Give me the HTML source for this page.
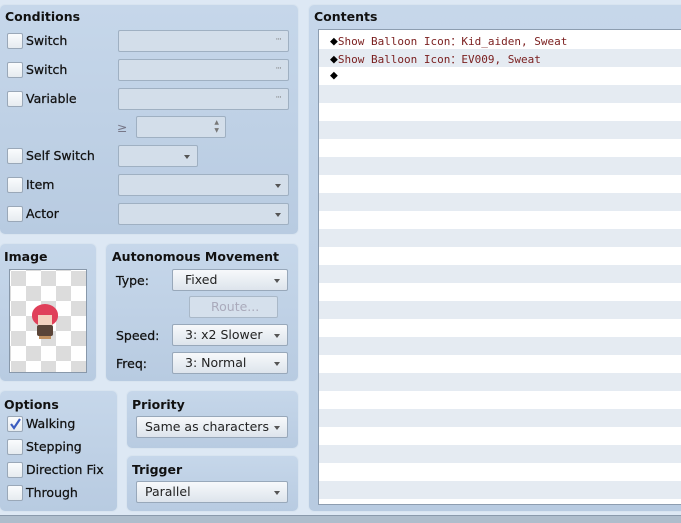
<!DOCTYPE html>
<html><head><style>
*{box-sizing:border-box;margin:0;padding:0}
body{width:681px;height:523px;overflow:hidden;background:#dde8f4;font-family:"DejaVu Sans","Liberation Sans",sans-serif;font-size:12px;color:#1a1a1a;position:relative}
.p{position:absolute;background:linear-gradient(#c6d7ea,#b8cbe1);border-radius:5px;box-shadow:0 0 0 1px #d8e4f0}
.t{position:absolute;font-weight:bold;font-size:12.5px;color:#111}
.cb{position:absolute;width:16px;height:16px;background:linear-gradient(#fafcfe,#e6ebf0);border:1px solid #9aa8b8;border-radius:2px}
.l{position:absolute;font-size:12.5px;color:#111;-webkit-text-stroke:0.25px #111}
.f{position:absolute;height:22px;border:1px solid #9fb0c2;border-radius:2px;background:#d3deea}
.dd{position:absolute;height:22px;border:1px solid #98a8ba;border-radius:2px;background:linear-gradient(#f7f9fb,#dde4ec);font-size:12.5px;padding:2px 0 0 12px;color:#222}
.ar{position:absolute;right:7px;top:9px;width:0;height:0;border-left:3.5px solid transparent;border-right:3.5px solid transparent;border-top:4px solid #555}
.dots{position:absolute;right:7px;top:4px;font-size:9px;color:#777;letter-spacing:-1px}
.row{position:absolute;left:0;right:0;height:18px;font-family:"DejaVu Sans Mono","Liberation Mono",monospace;font-size:11px;color:#7a1e1e;padding:2px 0 0 11px;white-space:pre}
.dm{color:#000;font-size:13px;line-height:11px}
</style></head><body>
<div class="p" style="left:0;top:5px;width:298px;height:229px"></div>
<div class="t" style="left:5px;top:9px">Conditions</div>
<div class="cb" style="left:7px;top:33px"></div><div class="l" style="left:26px;top:33px">Switch</div>
<div class="f" style="left:118px;top:30px;width:171px"><span class="dots">···</span></div>
<div class="cb" style="left:7px;top:62px"></div><div class="l" style="left:26px;top:62px">Switch</div>
<div class="f" style="left:118px;top:59px;width:171px"><span class="dots">···</span></div>
<div class="cb" style="left:7px;top:91px"></div><div class="l" style="left:26px;top:91px">Variable</div>
<div class="f" style="left:118px;top:88px;width:171px"><span class="dots">···</span></div>
<div class="l" style="left:117px;top:120px;color:#778;-webkit-text-stroke:0">≥</div>
<div class="f" style="left:136px;top:116px;width:90px"><span style="position:absolute;right:6px;top:2px;font-size:6px;color:#777;line-height:8px">▲<br>▼</span></div>
<div class="cb" style="left:7px;top:148px"></div><div class="l" style="left:26px;top:148px">Self Switch</div>
<div class="dd" style="left:118px;top:145px;width:80px;background:#d3deea;border-color:#9fb0c2"><span class="ar"></span></div>
<div class="cb" style="left:7px;top:177px"></div><div class="l" style="left:26px;top:177px">Item</div>
<div class="dd" style="left:118px;top:174px;width:171px;background:#d3deea;border-color:#9fb0c2"><span class="ar"></span></div>
<div class="cb" style="left:7px;top:206px"></div><div class="l" style="left:26px;top:206px">Actor</div>
<div class="dd" style="left:118px;top:203px;width:171px;background:#d3deea;border-color:#9fb0c2"><span class="ar"></span></div>

<div class="p" style="left:0;top:244px;width:96px;height:137px"></div>
<div class="t" style="left:4px;top:249px">Image</div>
<div style="position:absolute;left:9px;top:269px;width:78px;height:104px;border:1px solid #8898aa;background-color:#fff;background-image:conic-gradient(#fff 25%,#dcdcdc 0 50%,#fff 0 75%,#dcdcdc 0);background-size:30px 30px;background-position:1px 1px"></div>
<div style="position:absolute;left:32px;top:304px;width:26px;height:22px;background:#e0405a;border-radius:50% 50% 45% 45%"></div>
<div style="position:absolute;left:38px;top:315px;width:14px;height:10px;background:#f3d2c0"></div>
<div style="position:absolute;left:37px;top:325px;width:16px;height:11px;background:#5a4438;border-radius:2px"></div>
<div style="position:absolute;left:39px;top:336px;width:12px;height:3px;background:#c09060"></div>

<div class="p" style="left:106px;top:244px;width:192px;height:137px"></div>
<div class="t" style="left:112px;top:249px">Autonomous Movement</div>
<div class="l" style="left:116px;top:273px">Type:</div>
<div class="dd" style="left:172px;top:269px;width:116px">Fixed<span class="ar"></span></div>
<div class="dd" style="left:189px;top:296px;width:89px;color:#aab;padding-left:21px;background:#d5e0ec;border-color:#a9b8c8">Route...</div>
<div class="l" style="left:116px;top:328px">Speed:</div>
<div class="dd" style="left:172px;top:324px;width:116px">3: x2 Slower<span class="ar"></span></div>
<div class="l" style="left:116px;top:356px">Freq:</div>
<div class="dd" style="left:172px;top:352px;width:116px">3: Normal<span class="ar"></span></div>

<div class="p" style="left:0;top:391px;width:117px;height:120px"></div>
<div class="t" style="left:4px;top:397px">Options</div>
<div class="cb" style="left:7px;top:416px"></div>
<svg style="position:absolute;left:9px;top:418px" width="13" height="12"><path d="M2 6 L5 10 L11 1" stroke="#3a5cc0" stroke-width="2.2" fill="none"/></svg>
<div class="l" style="left:26px;top:416px">Walking</div>
<div class="cb" style="left:7px;top:439px"></div><div class="l" style="left:26px;top:439px">Stepping</div>
<div class="cb" style="left:7px;top:462px"></div><div class="l" style="left:26px;top:462px">Direction Fix</div>
<div class="cb" style="left:7px;top:485px"></div><div class="l" style="left:26px;top:485px">Through</div>

<div class="p" style="left:127px;top:391px;width:171px;height:57px"></div>
<div class="t" style="left:132px;top:397px">Priority</div>
<div class="dd" style="left:136px;top:416px;width:152px;padding-left:8px">Same as characters<span class="ar"></span></div>
<div class="p" style="left:127px;top:456px;width:171px;height:55px"></div>
<div class="t" style="left:132px;top:462px">Trigger</div>
<div class="dd" style="left:136px;top:481px;width:152px;padding-left:8px">Parallel<span class="ar"></span></div>

<div class="p" style="left:309px;top:5px;width:380px;height:506px"></div>
<div class="t" style="left:314px;top:9px">Contents</div>
<div style="position:absolute;left:318px;top:29px;width:370px;height:476px;border:1px solid #8d9db0;background:#fff;overflow:hidden">
<div style="position:relative;height:100%">
<div class="row" style="top:1px"><span class="dm">◆</span>Show Balloon Icon：Kid_aiden, Sweat</div>
<div class="row" style="top:19px;background:#e5ebf2"><span class="dm">◆</span>Show Balloon Icon：EV009, Sweat</div>
<div class="row" style="top:37px"><span class="dm">◆</span></div>
<div style="position:absolute;left:0;right:0;top:55px;bottom:0;background:repeating-linear-gradient(#e5ebf2 0 18px,#fff 18px 36px)"></div>
</div></div>
<div style="position:absolute;left:0;top:515px;width:681px;height:8px;background:#aebdcc;border-top:1px solid #8a9aac"></div>
</body></html>
